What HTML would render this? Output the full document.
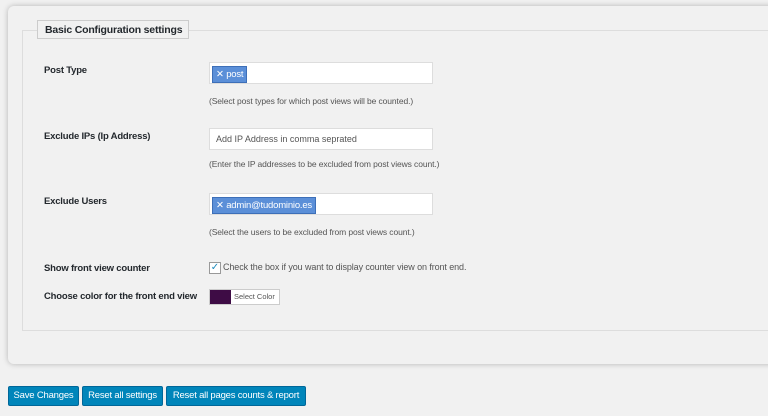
<!DOCTYPE html>
<html><head><style>
body{margin:0;width:768px;height:416px;background:#f1f1f1;font-family:"Liberation Sans",sans-serif;position:relative;overflow:hidden;color:#23282d}
div{white-space:nowrap}
.panel{position:absolute;left:8px;top:6px;width:800px;height:358px;background:#f1f1f1;border-radius:6px;box-shadow:0 0 6px rgba(0,0,0,.25)}
.fs{position:absolute;left:22px;top:30px;width:800px;height:299px;border:1px solid #ddd;border-right:none}
.legend{position:absolute;left:37px;top:20px;height:19px;border:1px solid #ccc;background:#f1f1f1;font-size:10.5px;font-weight:bold;line-height:19px;padding-left:7px;box-sizing:border-box;width:152px;letter-spacing:-0.2px}
.lbl{position:absolute;left:44px;font-size:9.5px;font-weight:bold;color:#23282d;letter-spacing:-0.2px}
.inp{position:absolute;left:209px;width:224px;height:22px;border:1px solid #ddd;background:#fff;box-sizing:border-box}
.tag{position:absolute;left:2px;top:3px;height:15px;background:#5b8fd8;color:#fff;font-size:9.5px;line-height:15px;padding:0 3px;border:1px solid #3d6fb8;letter-spacing:-0.2px}
.help{position:absolute;left:209px;font-size:8.5px;color:#555;letter-spacing:-0.1px}
.btn{position:absolute;top:386px;height:20px;background:#0085ba;color:#fff;font-size:9.5px;line-height:18px;text-align:center;border-radius:2px;border:1px solid #006799;box-sizing:border-box;letter-spacing:-0.2px}
</style></head><body>
<div class="panel"></div>
<div class="fs"></div>
<div class="legend">Basic Configuration settings</div>
<div class="lbl" style="top:65px">Post Type</div>
<div class="inp" style="top:62px"><div class="tag">✕ post</div></div>
<div class="help" style="top:96px">(Select post types for which post views will be counted.)</div>
<div class="lbl" style="top:131px">Exclude IPs (Ip Address)</div>
<div class="inp" style="top:128px;font-size:9px;color:#555;line-height:20px;padding-left:6px">Add IP Address in comma seprated</div>
<div class="help" style="top:159px">(Enter the IP addresses to be excluded from post views count.)</div>
<div class="lbl" style="top:196px">Exclude Users</div>
<div class="inp" style="top:193px"><div class="tag">✕ admin@tudominio.es</div></div>
<div class="help" style="top:227px">(Select the users to be excluded from post views count.)</div>
<div class="lbl" style="top:263px">Show front view counter</div>
<div style="position:absolute;left:209px;top:262px;width:10px;height:10px;border:1px solid #999;background:#fff;color:#1e8cbe;font-size:10px;line-height:10px;text-align:center">✓</div>
<div class="help" style="top:262px;left:223px;font-size:9px">Check the box if you want to display counter view on front end.</div>
<div class="lbl" style="top:291px">Choose color for the front end view</div>
<div style="position:absolute;left:209px;top:289px;width:71px;height:16px;border:1px solid #ccc;background:#fff;box-sizing:border-box">
<div style="position:absolute;left:0;top:0;width:21px;height:14px;background:#3e0c45"></div>
<div style="position:absolute;left:24px;top:0;font-size:7.5px;line-height:14px;color:#555">Select Color</div></div>
<div class="btn" style="left:8px;width:71px">Save Changes</div>
<div class="btn" style="left:82px;width:81px">Reset all settings</div>
<div class="btn" style="left:166px;width:140px">Reset all pages counts &amp; report</div>
</body></html>
